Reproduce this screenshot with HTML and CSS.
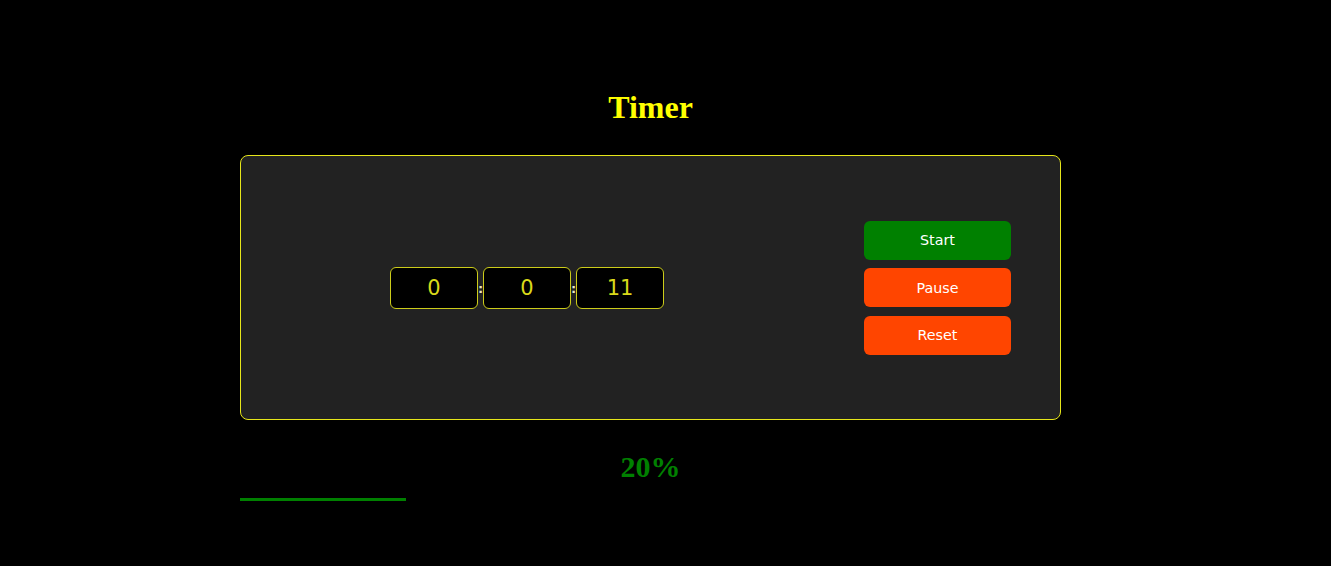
FILE: index.html
```html
<!DOCTYPE html>
<html>
<head>
<meta charset="utf-8">
<link rel="stylesheet" href="styles.css">
</head>
<body>
<div class="page">
  <h1 class="title">Timer</h1>
  <div class="panel">
    <div class="time">
      <div class="cell">0</div><span class="colon">:</span><div class="cell">0</div><span class="colon">:</span><div class="cell">11</div>
    </div>
    <div class="buttons">
      <button class="btn start">Start</button>
      <button class="btn pause">Pause</button>
      <button class="btn reset">Reset</button>
    </div>
  </div>
  <h2 class="percent">20%</h2>
  <div class="bar"><div class="fill" style="width: 20.2%"></div></div>
</div>
</body>
</html>
```
FILE: styles.css
```css
html, body {
  margin: 0;
  padding: 0;
  background: #000;
}
body {
  font-family: "Liberation Serif", "Times New Roman", serif;
}
.page {
  width: 821px;
  margin: 0 0 0 240px;
  padding-top: 89px;
}
.title {
  margin: 0 0 29px;
  text-align: center;
  color: #ffff00;
  font-size: 32px;
  font-weight: bold;
  line-height: 37px;
}
.panel {
  box-sizing: border-box;
  height: 265px;
  border: 1px solid #e6e61a;
  border-radius: 8px;
  background: #222;
  display: flex;
  align-items: center;
  justify-content: space-between;
  padding: 0 49px 0 149px;
}
.time {
  display: flex;
  align-items: center;
}
.cell {
  box-sizing: border-box;
  width: 88px;
  height: 42px;
  border: 1px solid #cccc1a;
  border-radius: 6px;
  background: #000;
  color: #d9d91a;
  font-family: "DejaVu Sans", Verdana, sans-serif;
  font-size: 21px;
  display: flex;
  align-items: center;
  justify-content: center;
}
.colon {
  width: 5px;
  text-align: center;
  color: #e8e8c8;
  font-family: "DejaVu Sans", sans-serif;
  font-weight: bold;
  font-size: 13px;
  line-height: 1;
  padding-top: 1px;
}
.buttons {
  display: flex;
  flex-direction: column;
  gap: 8.5px;
}
.btn {
  width: 147px;
  height: 39px;
  border: none;
  border-radius: 6px;
  color: #fff;
  font-family: "DejaVu Sans", Verdana, sans-serif;
  font-size: 14.3px;
  padding: 0;
}
.start { background: #008000; }
.pause, .reset { background: #ff4500; }
.percent {
  margin: 28px 0 0;
  text-align: center;
  color: #008000;
  font-size: 30px;
  font-weight: bold;
  line-height: 37px;
}
.bar {
  margin-top: 13px;
  height: 3px;
}
.fill {
  height: 3px;
  background: #008000;
}
```
